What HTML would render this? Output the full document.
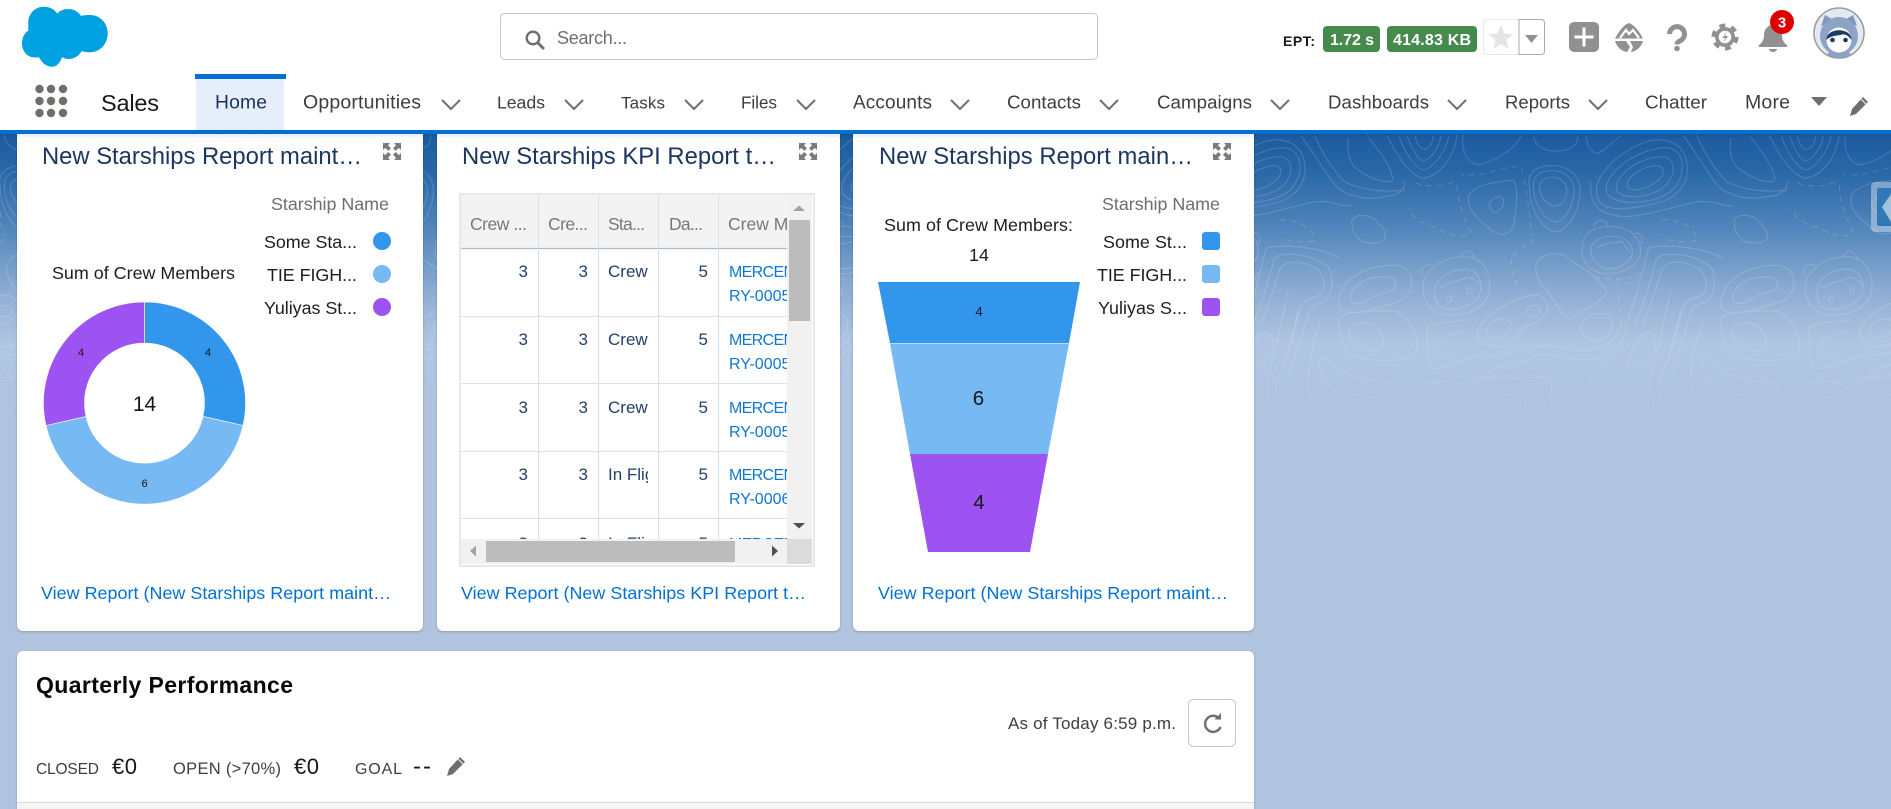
<!DOCTYPE html>
<html lang="en"><head><meta charset="utf-8"><title>Sales Home</title>
<style>
html,body{margin:0;padding:0;width:1891px;height:809px;overflow:hidden;background:#b0c4df}
#root{position:relative;width:1891px;height:809px;overflow:hidden}
#bg{position:absolute;left:0;top:134px;width:1891px;height:675px;background:linear-gradient(#1a5b9e 0,#2a68a8 40px,#5084ba 92px,#8eadd3 158px,#afc5e1 208px,#b0c4df 300px)}
.card{position:absolute;background:#fff;border-radius:6px;box-shadow:0 1px 2px rgba(0,0,0,.22)}
#nav{position:absolute;left:0;top:0;width:1891px;height:130px;background:#fff;border-bottom:4px solid #0070d2}
#sh{position:absolute;left:0;top:134px;width:1891px;height:5px;background:linear-gradient(rgba(0,0,0,.08),rgba(0,0,0,0))}
svg{position:absolute;left:0;top:0}
text{font-family:"Liberation Sans",sans-serif}
.n{fill:#3e3e3c}
.ttl{font-size:23.8px;fill:#1b3660}
.lg{font-size:17.9px;fill:#1d1d1d}
.sn{font-size:17.9px;fill:#706e6b}
.vr{font-size:17.9px;fill:#0070d2}
.th{font-size:17.5px;fill:#7a7876}
.td{font-size:17px;fill:#24406a}
.lk{font-size:16px;fill:#0f76d2}
.ch{fill:none;stroke:#706e6b;stroke-width:2}
.ct{fill:none;stroke:#fff;stroke-width:1;vector-effect:non-scaling-stroke}
.ds{stroke-dasharray:6 5}
</style></head><body><div id="root">
<div id="bg"></div>
<svg width="1891" height="809" viewBox="0 0 1891 809" style="z-index:1">
<defs>
<linearGradient id="fg" gradientUnits="userSpaceOnUse" x1="0" y1="134" x2="0" y2="430">
<stop offset="0" stop-color="#fff" stop-opacity=".17"/><stop offset=".6" stop-color="#fff" stop-opacity=".19"/><stop offset=".85" stop-color="#fff" stop-opacity=".12"/><stop offset="1" stop-color="#fff" stop-opacity="0"/>
</linearGradient>
<mask id="fm" maskUnits="userSpaceOnUse" x="0" y="134" width="1891" height="300"><rect x="0" y="134" width="1891" height="300" fill="url(#fg)"/></mask>
<clipPath id="bgc"><rect x="0" y="134" width="1891" height="300"/></clipPath>
<g id="tile">
<path class="ct" d="M913,180C915,150 950,125 985,122C1010,125 1005,150 985,170C960,195 915,205 913,180Z"/>
<path class="ct" d="M885,185C890,140 950,95 1000,95C1035,100 1035,150 1005,185C970,220 885,230 885,185Z"/>
<path class="ct" d="M860,190C865,130 945,70 1010,68C1060,75 1060,150 1025,195C985,240 860,250 860,190Z"/>
<path class="ct" d="M838,215C825,160 880,90 950,55C1000,30 1050,50 1060,110C1070,170 1040,220 985,235C930,250 850,270 838,215Z"/>
<path class="ct" d="M822,170C820,230 830,265 900,275C960,275 1040,240 1090,230C1130,225 1160,250 1175,240"/>
<path class="ct" d="M345,30C360,90 390,130 405,135C430,130 460,85 470,30"/>
<path class="ct" d="M365,30C380,80 395,105 405,108C420,105 445,75 450,30"/>
<path class="ct" d="M385,30C390,60 400,75 410,72C425,68 430,50 430,30"/>
<path class="ct" d="M315,30C340,90 370,150 405,160C450,150 480,100 490,30"/>
<path class="ct" d="M505,30C500,70 510,110 540,120C580,110 630,80 650,30"/>
<path class="ct" d="M520,210C540,170 610,170 630,165C645,200 635,260 630,300C620,340 590,330 570,310C540,280 510,250 520,210Z"/>
<path class="ct" d="M570,235C575,220 600,205 605,225C608,250 590,265 580,260C572,255 568,245 570,235Z"/>
<path class="ct" d="M670,190C660,140 690,120 730,122C780,125 800,170 795,210C790,270 760,320 735,320C700,315 670,250 670,190Z"/>
<path class="ct" d="M680,190C675,150 700,135 730,137C765,140 785,175 780,210C775,250 755,290 735,290C705,285 680,235 680,190Z"/>
<path class="ct" d="M695,195C690,170 710,155 730,157C752,160 765,180 762,205C758,230 745,243 732,243C712,240 697,215 695,195Z"/>
<path class="ct" d="M680,30C680,70 720,85 760,75C785,65 790,50 790,30"/>
<path class="ct" d="M810,30C810,60 825,85 840,85C860,75 880,45 900,30"/>
<path class="ct" d="M1050,30C1070,60 1100,120 1130,170C1150,205 1200,230 1260,215C1300,210 1310,195 1310,170"/>
<path class="ct" d="M1085,30C1100,70 1125,130 1160,170C1190,190 1250,205 1310,195"/>
<path class="ct" d="M1170,40C1165,80 1170,120 1200,140C1240,170 1280,180 1280,160C1275,120 1240,70 1215,30"/>
<path class="ct" d="M405,490C405,430 460,395 510,395C560,400 575,450 570,500C560,550 510,575 465,570C425,565 405,530 405,490Z"/>
<path class="ct" d="M435,495C435,460 475,430 515,432C545,440 555,480 545,510C530,545 480,560 455,550C440,540 432,520 435,495Z"/>
<path class="ct" d="M500,395C505,375 525,365 535,405M430,420C400,415 395,445 408,455M445,490C470,470 490,470 510,460C520,450 540,470 550,480"/>
<ellipse class="ct" cx="470" cy="523" rx="6" ry="10"/><ellipse class="ct" cx="521" cy="498" rx="6" ry="10"/>
<path class="ct" d="M800,370C800,320 840,300 880,305C930,310 950,350 945,390C935,430 890,450 850,445C815,435 800,410 800,370Z"/>
<path class="ct" d="M822,375C822,345 855,330 885,335C915,340 928,365 925,390C915,420 885,435 855,430C835,420 822,400 822,375Z"/>
<path class="ct" d="M830,305C835,280 860,280 865,305M930,325C950,320 955,345 945,360M835,370C860,350 880,355 900,350C910,370 915,380 920,380"/>
<path class="ct" d="M685,430C685,390 730,375 760,395C800,430 850,460 862,500C860,520 800,560 770,580C750,580 735,520 700,480C690,460 685,445 685,430Z"/>
<path class="ct" d="M1178,290C1180,265 1225,265 1240,290C1250,305 1265,315 1260,340C1250,360 1220,355 1205,350C1185,335 1178,310 1178,290Z"/>
<path class="ct" d="M950,600C970,550 990,470 1000,430C1020,400 1060,410 1090,430C1110,450 1115,490 1100,510C1080,520 1060,520 1050,550C1040,590 1030,650 1010,720"/>
<path class="ct" d="M930,600C955,540 975,450 985,400C1010,375 1080,390 1120,425C1135,460 1130,510 1110,530C1085,540 1075,540 1070,565C1060,610 1040,680 1020,760"/>
<path class="ct" d="M905,610C930,540 950,450 965,370C1000,355 1100,365 1150,400"/>
<path class="ct" d="M1175,520C1175,480 1215,455 1260,455C1295,455 1295,490 1270,500C1240,505 1220,525 1200,535C1185,540 1175,530 1175,520Z"/>
<path class="ct" d="M1145,540C1145,470 1200,425 1280,420C1330,420 1340,480 1310,520C1280,540 1240,545 1210,560C1180,565 1145,565 1145,540Z"/>
<path class="ct" d="M1170,620C1175,590 1230,580 1250,620C1260,640 1260,670 1240,678C1210,680 1175,660 1170,620Z"/>
<path class="ct" d="M1145,590C1140,560 1220,555 1290,560C1330,590 1345,640 1340,670C1330,710 1250,720 1180,690C1150,660 1145,620 1145,590Z"/>
<path class="ct" d="M565,610C570,585 610,570 625,595C625,620 600,640 580,640C570,640 565,625 565,610Z"/>
<path class="ct" d="M540,620C550,570 640,510 690,510C730,530 720,580 670,600C640,610 640,650 600,665C570,670 540,650 540,620Z"/>
<circle class="ct" cx="680" cy="558" r="17"/>
<path class="ct" d="M797,605C800,575 840,555 865,570C885,590 875,630 850,645C820,650 797,635 797,605Z"/>
<path class="ct" d="M415,610C430,590 490,590 520,585M415,610C415,650 415,700 425,730C470,735 500,700 550,690C610,690 640,680 680,665C720,650 790,690 850,670C880,650 890,620 900,590"/>
<path class="ct" d="M560,745C610,710 650,720 690,690C730,680 790,720 850,695C890,675 905,640 915,600"/>
<path class="ct" d="M910,725C920,680 940,620 970,622C990,640 985,690 960,710C940,720 920,730 910,725Z"/>
<path class="ct" d="M400,780C470,760 490,770 510,790C530,760 560,750 650,760C720,755 730,760 725,790C715,830 730,860 740,880"/>
<path class="ct" d="M420,860C440,800 470,780 500,825M555,880C560,830 590,800 650,815C670,840 660,870 650,885"/>
<path class="ct" d="M1100,700C1120,690 1130,730 1170,750C1220,770 1290,770 1290,785C1280,800 1200,830 1160,825C1130,800 1090,740 1100,700Z"/>
<path class="ct" d="M1020,500C1005,580 990,680 970,750C960,800 980,850 1000,900M1045,560C1030,640 1010,720 990,770C985,810 1010,860 1030,900"/>
<path class="ct" d="M1100,590C1080,650 1070,720 1070,780C1075,820 1085,860 1100,890"/>
<path class="ct ds" d="M490,180C490,230 510,290 525,320C520,335 480,340 450,315C420,300 380,290 370,250"/>
<path class="ct ds" d="M625,400C620,440 640,470 640,490M680,340C670,360 640,370 625,400"/>
<path class="ct ds" d="M1000,285C1040,280 1085,310 1085,345C1060,360 1020,340 1000,345"/>
<path class="ct ds" d="M650,130C660,180 670,250 675,330"/>
<path class="ct ds" d="M480,170C450,190 400,185 380,170M640,125C600,125 560,155 500,150"/>
<path class="ct ds" d="M440,690C440,650 450,630 510,620M490,700C470,690 445,700 440,690"/>
<path class="ct ds" d="M550,760C620,740 700,750 770,770C775,810 740,840 690,860"/>
<path class="ct ds" d="M800,800C810,770 850,740 880,700M800,800C810,840 850,870 900,860"/>
<path class="ct ds" d="M830,455C860,465 920,470 950,440M880,480C920,480 935,470 945,450M890,510C895,540 895,580 900,600"/>
</g>
</defs>
<g clip-path="url(#bgc)"><g mask="url(#fm)">
<g transform="translate(1260,125) scale(.4024,.3333)"><use href="#tile"/><use href="#tile" x="950"/><use href="#tile" x="-950"/><use href="#tile" x="-1900"/><use href="#tile" x="-2850"/><use href="#tile" x="-3800"/></g>
</g></g>
<path d="M1891,182H1876Q1871,182 1871,187V227Q1871,232 1876,232H1891Z" fill="#fff" fill-opacity=".38"/>
<path d="M1891,188H1879Q1877,188 1877,190V224Q1877,226 1879,226H1891Z" fill="#3079b6"/>
<path d="M1891,194L1882,207L1891,222Z" fill="#a3c2de"/>
</svg>
<div class="card" style="left:17px;top:128px;width:406px;height:503px"></div>
<div class="card" style="left:437px;top:128px;width:403px;height:503px"></div>
<div class="card" style="left:853px;top:128px;width:401px;height:503px"></div>
<div class="card" style="left:17px;top:651px;width:1237px;height:158px;border-radius:6px 6px 0 0"></div>
<div id="nav"></div>
<div id="sh"></div>
<svg width="1891" height="809" viewBox="0 0 1891 809" style="z-index:5">
<defs>
<clipPath id="tb"><rect x="461" y="195" width="326" height="344"/></clipPath>
<clipPath id="c3"><rect x="600" y="249" width="48" height="290"/></clipPath>
<clipPath id="c5"><rect x="719" y="195" width="68" height="344"/></clipPath>
<clipPath id="av"><circle cx="1839" cy="33" r="24.5"/></clipPath>
<g id="exp" fill="#7b7b7b">
<path d="M0,0H7L5,2.300L8,5.300L5.300,8L2.300,5L0,7Z"/>
<path d="M18,0H11L13,2.300L10,5.300L12.700,8L15.700,5L18,7Z"/>
<path d="M0,17H7L5,14.700L8,11.700L5.300,9L2.300,12L0,10Z"/>
<path d="M18,17H11L13,14.700L10,11.700L12.700,9L15.700,12L18,10Z"/>
</g>
<g id="chv"><polyline class="ch" points="0,0 9,9 18,0"/></g>
<g id="pen"><path d="M14,1L19,6L7,18L1,20L3,13Z" fill="#706e6b"/><path d="M12,3L17,8" stroke="#fff" stroke-width=".9"/></g>
</defs>

<!-- logo -->
<path fill="#00a1e0" d="M28.300,23C28,13 36,6.700 43.300,6.700C50,6.700 54,9 57.300,13.500C60,10.500 64,9 68.300,9C74,9 78.700,12 81,16C83,15.200 87,15 90,15C100,15 107.700,23 107.700,33.300C107.700,44 100,52.300 90,52.300C88,52.300 83,52 81.700,51C79,56 74,59 68.300,59C66,59 64,58.200 62,57.300C60,63 57,66.700 52,66.700C46,66.700 41.500,62.500 39,57.300C37,57.700 35,57.300 33.300,57.300C27,57 22,51 22,43.300C22,37 25,32.500 28.300,30.700Z"/>

<!-- search -->
<rect x="500.5" y="13.5" width="597" height="46" rx="4" fill="#fff" stroke="#c9c7c5"/>
<circle cx="533" cy="38" r="6.3" fill="none" stroke="#706e6b" stroke-width="2.4"/><path d="M538,43L544,49" stroke="#706e6b" stroke-width="2.8"/>
<text x="557" y="44" font-size="18" fill="#706e6b" textLength="70">Search...</text>

<!-- EPT -->
<text x="1283" y="46" font-size="14" font-weight="700" fill="#16181a" textLength="32">EPT:</text>
<rect x="1323" y="26" width="57" height="26" rx="4" fill="#478a4d"/>
<text x="1330" y="45" font-size="16" font-weight="700" fill="#fff" textLength="44">1.72 s</text>
<rect x="1387" y="26" width="90" height="26" rx="4" fill="#478a4d"/>
<text x="1393" y="45" font-size="16" font-weight="700" fill="#fff" textLength="78">414.83 KB</text>
<path d="M1487,19.5H1519V54.5H1487Q1483.5,54.5 1483.5,51V23Q1483.5,19.5 1487,19.5Z" fill="#fff" stroke="#e6e6e6"/>
<path d="M1519,19.5H1541Q1544.5,19.5 1544.5,23V51Q1544.5,54.5 1541,54.5H1519Z" fill="#fff" stroke="#a8a8a8"/>
<path d="M1501,25L1504.4,33.5L1513.5,34.1L1506.5,40L1508.7,49L1501,44L1493.3,49L1495.5,40L1488.5,34.1L1497.6,33.5Z" fill="#e5e5e5"/>
<path d="M1525,35H1538L1531.5,43Z" fill="#919191"/>

<!-- utility icons -->
<rect x="1569" y="22" width="30" height="30" rx="5" fill="#919191"/>
<path d="M1584,27.500V46.500M1574.500,37H1593.500" stroke="#fff" stroke-width="3"/>
<path d="M1629,23C1635,25 1640,33 1643,38.500H1615C1618,33 1623,25 1629,23Z" fill="#919191"/>
<path d="M1620,38L1626,30L1629,34L1633,30L1639,38" fill="none" stroke="#fff" stroke-width="2.200"/>
<path d="M1615,41H1626L1630,47L1627,52C1621,51 1617,47 1615,41ZM1630,41H1643C1641,47 1637,51 1631,52L1633,47Z" fill="#919191"/>
<path d="M1669.5,34A7.500,7.500 0 1 1 1680,41C1677.500,42 1677,43 1677,44.500" fill="none" stroke="#919191" stroke-width="5"/><circle cx="1677" cy="48.500" r="2.800" fill="#919191"/>
<circle cx="1725" cy="37" r="10" fill="#919191"/><circle cx="1725" cy="37" r="11.500" fill="none" stroke="#919191" stroke-width="4" stroke-dasharray="6 6.040"/><circle cx="1725" cy="37" r="6.300" fill="#fff"/><path d="M1727,31.500L1722.500,38H1725.500L1723.500,42.500L1728,36H1725Z" fill="#919191"/>
<path d="M1759,45C1762,43 1764,40 1764,35C1764,29 1768,25 1773,25C1778,25 1782,29 1782,35C1782,40 1784,43 1787,45C1788,46 1787,47 1786,47H1760C1759,47 1758,46 1759,45Z" fill="#919191"/>
<path d="M1769,49H1777A4,3 0 0 1 1769,49Z" fill="#919191"/>
<circle cx="1782" cy="22" r="12" fill="#dc0000"/>
<text x="1782" y="27.5" font-size="15" font-weight="700" fill="#fff" text-anchor="middle">3</text>
<circle cx="1839" cy="33" r="25" fill="#e4e8ef" stroke="#9a9a9a" stroke-width="1.5"/>
<g clip-path="url(#av)">
<path d="M1821,26L1825,15L1835,21ZM1857,26L1853,15L1843,21Z" fill="#7f97bd"/>
<ellipse cx="1839" cy="56" rx="12" ry="7" fill="#8aa3c7"/>
<circle cx="1839" cy="36" r="19" fill="#8aa3c7"/>
<circle cx="1839" cy="40" r="12.500" fill="#fff"/>
<path d="M1826.5,40C1826,27 1852,27 1851.5,40C1848,35 1845,34 1842,34.500C1838,36 1831,35 1826.5,40Z" fill="#1c3a66"/>
<circle cx="1832.500" cy="40" r="2.300" fill="#1c3a66"/><circle cx="1845.500" cy="40" r="2.300" fill="#1c3a66"/>
</g>

<!-- nav -->
<g fill="#706e6b"><circle cx="39.5" cy="89" r="4.2"/><circle cx="51" cy="89" r="4.2"/><circle cx="63" cy="89" r="4.2"/><circle cx="39.5" cy="101" r="4.2"/><circle cx="51" cy="101" r="4.2"/><circle cx="63" cy="101" r="4.2"/><circle cx="39.5" cy="113" r="4.2"/><circle cx="51" cy="113" r="4.2"/><circle cx="63" cy="113" r="4.2"/></g>
<text x="101" y="111" font-size="23.5" fill="#16181a" textLength="58">Sales</text>
<rect x="196" y="79" width="88" height="51" fill="#e6eff9"/>
<rect x="195" y="74" width="91" height="5" fill="#0070d2"/>
<text class="n" x="215" y="108.500" font-size="19.300" textLength="52" style="fill:#16325c">Home</text>
<text class="n" x="303" y="108.500" font-size="19.500" textLength="118">Opportunities</text><use href="#chv" x="442" y="100"/>
<text class="n" x="497" y="108.500" font-size="17.800" textLength="48">Leads</text><use href="#chv" x="565" y="100"/>
<text class="n" x="621" y="108.500" font-size="17" textLength="44">Tasks</text><use href="#chv" x="685" y="100"/>
<text class="n" x="741" y="108.500" font-size="17.200" textLength="36">Files</text><use href="#chv" x="797" y="100"/>
<text class="n" x="853" y="108.500" font-size="19" textLength="79">Accounts</text><use href="#chv" x="951" y="100"/>
<text class="n" x="1007" y="108.500" font-size="18.700" textLength="74">Contacts</text><use href="#chv" x="1100" y="100"/>
<text class="n" x="1157" y="108.500" font-size="18.700" textLength="95">Campaigns</text><use href="#chv" x="1271" y="100"/>
<text class="n" x="1328" y="108.500" font-size="18.600" textLength="101">Dashboards</text><use href="#chv" x="1448" y="100"/>
<text class="n" x="1505" y="108.500" font-size="18.500" textLength="65">Reports</text><use href="#chv" x="1589" y="100"/>
<text class="n" x="1645" y="108.500" font-size="18.800" textLength="62">Chatter</text>
<text class="n" x="1745" y="108.500" font-size="19.500" textLength="45">More</text>
<path d="M1811,97H1827L1819,106Z" fill="#706e6b"/>
<use href="#pen" x="1849" y="96"/>

<!-- card 1 -->
<text class="ttl" x="42" y="164" textLength="320">New Starships Report maint…</text>
<use href="#exp" x="383" y="143"/>
<text class="sn" x="271" y="210" textLength="118">Starship Name</text>
<text class="lg" x="264" y="248" textLength="93">Some Sta...</text><circle cx="382" cy="241" r="9" fill="#3296ed"/>
<text class="lg" x="267" y="281" textLength="90">TIE FIGH...</text><circle cx="382" cy="274" r="9" fill="#77b9f2"/>
<text class="lg" x="264" y="314" textLength="93">Yuliyas St...</text><circle cx="382" cy="307" r="9" fill="#9d53f2"/>
<text class="lg" x="52" y="279" textLength="183">Sum of Crew Members</text>
<g stroke="#fff" stroke-width=".6">
<path d="M144.500,302A101,101 0 0 1 243,425.500L203,416.400A60,60 0 0 0 144.500,343Z" fill="#3296ed"/>
<path d="M243,425.500A101,101 0 0 1 46,425.500L86,416.400A60,60 0 0 0 203,416.400Z" fill="#77b9f2"/>
<path d="M46,425.500A101,101 0 0 1 144.500,302V343A60,60 0 0 0 86,416.400Z" fill="#9d53f2"/>
</g>
<text x="208" y="356" font-size="11" text-anchor="middle" fill="#16181a">4</text>
<text x="144.500" y="487" font-size="11" text-anchor="middle" fill="#16181a">6</text>
<text x="81" y="356" font-size="11" text-anchor="middle" fill="#16181a">4</text>
<text x="144.500" y="411" font-size="21" text-anchor="middle" fill="#16181a">14</text>
<text class="vr" x="41" y="599" textLength="350">View Report (New Starships Report maint…</text>

<!-- card 2 -->
<text class="ttl" x="462" y="164" textLength="314">New Starships KPI Report t…</text>
<use href="#exp" x="799" y="143"/>
<rect x="460" y="194" width="354" height="372" fill="#fff" stroke="#e2e0df" stroke-width="1.5"/>
<g clip-path="url(#tb)">
<rect x="461" y="195" width="326" height="53" fill="#f3f3f3"/>
<path d="M461,248.500H787" stroke="#a9bcd3" stroke-width="1.300"/>
<path d="M538.500,195V539M598.500,195V539M658.500,195V539M718.500,195V539" stroke="#d5dfea" stroke-width="1"/>
<path d="M461,316.500H787M461,383.500H787M461,451.500H787M461,518.500H787" stroke="#dde1ec" stroke-width="1"/>
<text class="th" x="470" y="230" textLength="57">Crew ...</text>
<text class="th" x="548" y="230" textLength="40">Cre...</text>
<text class="th" x="608" y="230" textLength="37">Sta...</text>
<text class="th" x="669" y="230" textLength="34">Da...</text>
<text class="th" x="728" y="230">Crew Members</text>
<g text-anchor="end">
<text class="td" x="528" y="277">3</text><text class="td" x="588" y="277">3</text><text class="td" x="708" y="277">5</text>
<text class="td" x="528" y="345">3</text><text class="td" x="588" y="345">3</text><text class="td" x="708" y="345">5</text>
<text class="td" x="528" y="413">3</text><text class="td" x="588" y="413">3</text><text class="td" x="708" y="413">5</text>
<text class="td" x="528" y="480">3</text><text class="td" x="588" y="480">3</text><text class="td" x="708" y="480">5</text>
<text class="td" x="528" y="549">3</text><text class="td" x="588" y="549">3</text><text class="td" x="708" y="549">5</text>
</g>
<g clip-path="url(#c3)">
<text class="td" x="608" y="277">Crew</text><text class="td" x="608" y="345">Crew</text><text class="td" x="608" y="413">Crew</text>
<text class="td" x="608" y="480">In Flight</text><text class="td" x="608" y="549">In Flight</text>
</g>
<g clip-path="url(#c5)">
<text class="lk" x="729" y="277" textLength="76">MERCENA</text><text class="lk" x="729" y="301">RY-0005</text>
<text class="lk" x="729" y="345" textLength="76">MERCENA</text><text class="lk" x="729" y="369">RY-0005</text>
<text class="lk" x="729" y="413" textLength="76">MERCENA</text><text class="lk" x="729" y="437">RY-0005</text>
<text class="lk" x="729" y="480" textLength="76">MERCENA</text><text class="lk" x="729" y="504">RY-0006</text>
<text class="lk" x="729" y="549" textLength="76">MERCENA</text>
</g>
</g>
<rect x="787" y="195" width="25" height="344" fill="#f1f1f1"/>
<rect x="789" y="220" width="21" height="101" fill="#bcbcbc"/>
<path d="M793,211L799,205.500L805,211Z" fill="#a3a3a3"/>
<path d="M793,523H805L799,528.500Z" fill="#505050"/>
<rect x="461" y="539" width="326" height="25" fill="#f1f1f1"/>
<rect x="486" y="541" width="249" height="21" fill="#bcbcbc"/>
<path d="M476,545.500V556.500L470,551Z" fill="#a3a3a3"/>
<path d="M772,545.500V556.500L778,551Z" fill="#505050"/>
<rect x="787" y="539" width="25" height="25" fill="#dcdcdc"/>
<text class="vr" x="461" y="599" textLength="345">View Report (New Starships KPI Report t…</text>

<!-- card 3 -->
<text class="ttl" x="879" y="164" textLength="314">New Starships Report main…</text>
<use href="#exp" x="1213" y="143"/>
<text class="sn" x="1102" y="210" textLength="118">Starship Name</text>
<text class="lg" x="1103" y="248" textLength="84">Some St...</text><rect x="1202" y="232" width="18" height="18" rx="3" fill="#3296ed"/>
<text class="lg" x="1097" y="281" textLength="90">TIE FIGH...</text><rect x="1202" y="265" width="18" height="18" rx="3" fill="#77b9f2"/>
<text class="lg" x="1098" y="314" textLength="89">Yuliyas S...</text><rect x="1202" y="298" width="18" height="18" rx="3" fill="#9d53f2"/>
<text class="lg" x="884" y="231" textLength="189">Sum of Crew Members:</text>
<text class="lg" x="979" y="261" text-anchor="middle">14</text>
<path d="M878,282H1080L1069,343H890Z" fill="#3296ed"/>
<path d="M890,343.500H1069L1048,454H910Z" fill="#77b9f2"/>
<path d="M910,454H1048L1030,552H928Z" fill="#9d53f2"/>
<text x="979" y="316" font-size="13" text-anchor="middle" fill="#16181a">4</text>
<text x="978.500" y="405" font-size="20.500" text-anchor="middle" fill="#16181a">6</text>
<text x="979" y="509" font-size="20.500" text-anchor="middle" fill="#16181a">4</text>
<text class="vr" x="878" y="599" textLength="350">View Report (New Starships Report maint…</text>

<!-- quarterly -->
<text x="36" y="693" font-size="23" font-weight="700" fill="#080707" textLength="257">Quarterly Performance</text>
<text x="1008" y="729" font-size="17" fill="#3e3e3c" textLength="168">As of Today 6:59 p.m.</text>
<rect x="1188.500" y="699.500" width="47" height="47" rx="5" fill="#fff" stroke="#c9c7c5"/>
<path d="M1219.500,719A8,8 0 1 0 1220.500,727" fill="none" stroke="#706e6b" stroke-width="2.400"/><path d="M1214.500,719.500H1221V713Z" fill="#706e6b"/>
<text x="36" y="774" font-size="15.500" fill="#3e3e3c" textLength="63">CLOSED</text>
<text x="112" y="774" font-size="22" fill="#16181a" textLength="25">€0</text>
<text x="173" y="774" font-size="16.500" fill="#3e3e3c" textLength="108">OPEN (&gt;70%)</text>
<text x="294" y="774" font-size="22" fill="#16181a" textLength="25">€0</text>
<text x="355" y="774" font-size="16" fill="#3e3e3c" textLength="47">GOAL</text>
<text x="413" y="774" font-size="24" fill="#16181a" textLength="18">--</text>
<use href="#pen" x="446" y="756"/>
<rect x="17" y="802" width="1237" height="1" fill="#dddbda"/>
<rect x="17" y="803" width="1237" height="6" fill="#f5f5f5"/>
</svg>
</div></body></html>
